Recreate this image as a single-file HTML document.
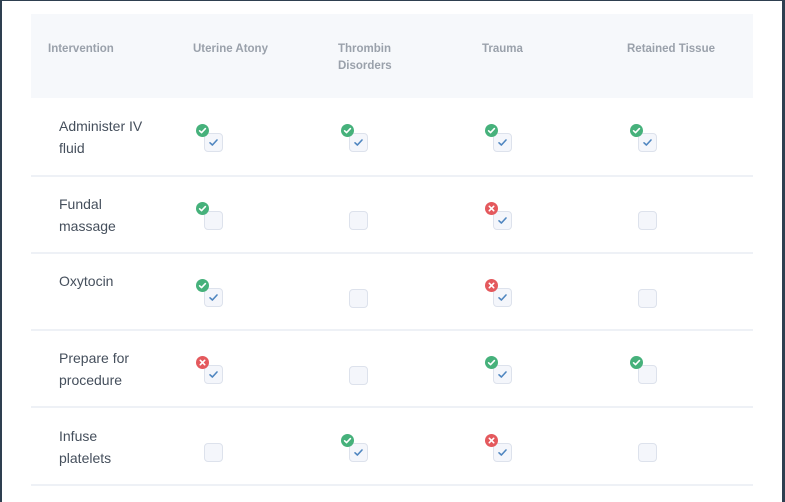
<!DOCTYPE html>
<html><head><meta charset="utf-8"><style>
*{margin:0;padding:0;box-sizing:border-box}
body{width:785px;height:502px;background:#fff;position:relative;overflow:hidden;font-family:"Liberation Sans",sans-serif}
.frame{position:absolute;left:0;top:0;width:785px;height:502px;border-top:1px solid #2e3f50;border-left:2px solid #2e3f50;border-right:3px solid #2e3f50}
.hd{position:absolute;left:31px;top:14px;width:722px;height:84px;background:#f6f8fb}
.h{position:absolute;font-size:11.5px;font-weight:bold;color:#9aa1ab;line-height:17px;top:41px}
.sep{position:absolute;left:31px;width:722px;height:2px;background:#eef1f6}
.t{position:absolute;left:59px;font-size:14px;color:#454f5c;line-height:22px}
.cb{position:absolute;width:19px;height:19px;border:1px solid #dde2ec;background:#f4f6fb;border-radius:4px}
.cb svg{position:absolute;left:3px;top:3px}
.ic{position:absolute;width:13px;height:13px;border-radius:50%}
.g{background:#46b17b}.r{background:#e4595d}
.ic svg{position:absolute;left:0;top:0}
</style></head><body>
<div class="frame"></div>
<div class="hd"></div>
<div class="h" style="left:48px">Intervention</div>
<div class="h" style="left:193px">Uterine Atony</div>
<div class="h" style="left:338px">Thrombin<br>Disorders</div>
<div class="h" style="left:482px">Trauma</div>
<div class="h" style="left:627px">Retained Tissue</div>

<div class="sep" style="top:175px"></div>
<div class="sep" style="top:252px"></div>
<div class="sep" style="top:329px"></div>
<div class="sep" style="top:406px"></div>
<div class="sep" style="top:484px"></div>

<div class="t" style="top:115px">Administer IV<br>fluid</div>
<div class="t" style="top:193px">Fundal<br>massage</div>
<div class="t" style="top:270px">Oxytocin</div>
<div class="t" style="top:347px">Prepare for<br>procedure</div>
<div class="t" style="top:425px">Infuse<br>platelets</div>

<div class="cb" style="left:204px;top:133px"><svg width="11" height="11" viewBox="0 0 11 11"><path d="M2 5.8L4.4 8 9 3" fill="none" stroke="#4f86c0" stroke-width="1.6" stroke-linecap="round" stroke-linejoin="round"/></svg></div>
<div class="ic g" style="left:196px;top:124px"><svg width="13" height="13"><path d="M3.6 6.8L5.6 8.6 9.4 4.6" fill="none" stroke="#fff" stroke-width="1.6" stroke-linecap="round" stroke-linejoin="round"/></svg></div>
<div class="cb" style="left:349px;top:133px"><svg width="11" height="11"><path d="M2 5.8L4.4 8 9 3" fill="none" stroke="#4f86c0" stroke-width="1.6" stroke-linecap="round" stroke-linejoin="round"/></svg></div>
<div class="ic g" style="left:341px;top:124px"><svg width="13" height="13"><path d="M3.6 6.8L5.6 8.6 9.4 4.6" fill="none" stroke="#fff" stroke-width="1.6" stroke-linecap="round" stroke-linejoin="round"/></svg></div>
<div class="cb" style="left:493px;top:133px"><svg width="11" height="11"><path d="M2 5.8L4.4 8 9 3" fill="none" stroke="#4f86c0" stroke-width="1.6" stroke-linecap="round" stroke-linejoin="round"/></svg></div>
<div class="ic g" style="left:485px;top:124px"><svg width="13" height="13"><path d="M3.6 6.8L5.6 8.6 9.4 4.6" fill="none" stroke="#fff" stroke-width="1.6" stroke-linecap="round" stroke-linejoin="round"/></svg></div>
<div class="cb" style="left:638px;top:133px"><svg width="11" height="11"><path d="M2 5.8L4.4 8 9 3" fill="none" stroke="#4f86c0" stroke-width="1.6" stroke-linecap="round" stroke-linejoin="round"/></svg></div>
<div class="ic g" style="left:630px;top:124px"><svg width="13" height="13"><path d="M3.6 6.8L5.6 8.6 9.4 4.6" fill="none" stroke="#fff" stroke-width="1.6" stroke-linecap="round" stroke-linejoin="round"/></svg></div>

<div class="cb" style="left:204px;top:211px"></div>
<div class="ic g" style="left:196px;top:202px"><svg width="13" height="13"><path d="M3.6 6.8L5.6 8.6 9.4 4.6" fill="none" stroke="#fff" stroke-width="1.6" stroke-linecap="round" stroke-linejoin="round"/></svg></div>
<div class="cb" style="left:349px;top:211px"></div>
<div class="cb" style="left:493px;top:211px"><svg width="11" height="11"><path d="M2 5.8L4.4 8 9 3" fill="none" stroke="#4f86c0" stroke-width="1.6" stroke-linecap="round" stroke-linejoin="round"/></svg></div>
<div class="ic r" style="left:485px;top:202px"><svg width="13" height="13"><path d="M4.3 4.3L8.7 8.7M8.7 4.3L4.3 8.7" stroke="#fff" stroke-width="1.6" stroke-linecap="round"/></svg></div>
<div class="cb" style="left:638px;top:211px"></div>

<div class="cb" style="left:204px;top:288px"><svg width="11" height="11"><path d="M2 5.8L4.4 8 9 3" fill="none" stroke="#4f86c0" stroke-width="1.6" stroke-linecap="round" stroke-linejoin="round"/></svg></div>
<div class="ic g" style="left:196px;top:279px"><svg width="13" height="13"><path d="M3.6 6.8L5.6 8.6 9.4 4.6" fill="none" stroke="#fff" stroke-width="1.6" stroke-linecap="round" stroke-linejoin="round"/></svg></div>
<div class="cb" style="left:349px;top:289px"></div>
<div class="cb" style="left:493px;top:288px"><svg width="11" height="11"><path d="M2 5.8L4.4 8 9 3" fill="none" stroke="#4f86c0" stroke-width="1.6" stroke-linecap="round" stroke-linejoin="round"/></svg></div>
<div class="ic r" style="left:485px;top:279px"><svg width="13" height="13"><path d="M4.3 4.3L8.7 8.7M8.7 4.3L4.3 8.7" stroke="#fff" stroke-width="1.6" stroke-linecap="round"/></svg></div>
<div class="cb" style="left:638px;top:289px"></div>

<div class="cb" style="left:204px;top:365px"><svg width="11" height="11"><path d="M2 5.8L4.4 8 9 3" fill="none" stroke="#4f86c0" stroke-width="1.6" stroke-linecap="round" stroke-linejoin="round"/></svg></div>
<div class="ic r" style="left:196px;top:356px"><svg width="13" height="13"><path d="M4.3 4.3L8.7 8.7M8.7 4.3L4.3 8.7" stroke="#fff" stroke-width="1.6" stroke-linecap="round"/></svg></div>
<div class="cb" style="left:349px;top:366px"></div>
<div class="cb" style="left:493px;top:365px"><svg width="11" height="11"><path d="M2 5.8L4.4 8 9 3" fill="none" stroke="#4f86c0" stroke-width="1.6" stroke-linecap="round" stroke-linejoin="round"/></svg></div>
<div class="ic g" style="left:485px;top:356px"><svg width="13" height="13"><path d="M3.6 6.8L5.6 8.6 9.4 4.6" fill="none" stroke="#fff" stroke-width="1.6" stroke-linecap="round" stroke-linejoin="round"/></svg></div>
<div class="cb" style="left:638px;top:365px"></div>
<div class="ic g" style="left:630px;top:356px"><svg width="13" height="13"><path d="M3.6 6.8L5.6 8.6 9.4 4.6" fill="none" stroke="#fff" stroke-width="1.6" stroke-linecap="round" stroke-linejoin="round"/></svg></div>

<div class="cb" style="left:204px;top:443px"></div>
<div class="cb" style="left:349px;top:443px"><svg width="11" height="11"><path d="M2 5.8L4.4 8 9 3" fill="none" stroke="#4f86c0" stroke-width="1.6" stroke-linecap="round" stroke-linejoin="round"/></svg></div>
<div class="ic g" style="left:341px;top:434px"><svg width="13" height="13"><path d="M3.6 6.8L5.6 8.6 9.4 4.6" fill="none" stroke="#fff" stroke-width="1.6" stroke-linecap="round" stroke-linejoin="round"/></svg></div>
<div class="cb" style="left:493px;top:443px"><svg width="11" height="11"><path d="M2 5.8L4.4 8 9 3" fill="none" stroke="#4f86c0" stroke-width="1.6" stroke-linecap="round" stroke-linejoin="round"/></svg></div>
<div class="ic r" style="left:485px;top:434px"><svg width="13" height="13"><path d="M4.3 4.3L8.7 8.7M8.7 4.3L4.3 8.7" stroke="#fff" stroke-width="1.6" stroke-linecap="round"/></svg></div>
<div class="cb" style="left:638px;top:443px"></div>
</body></html>
